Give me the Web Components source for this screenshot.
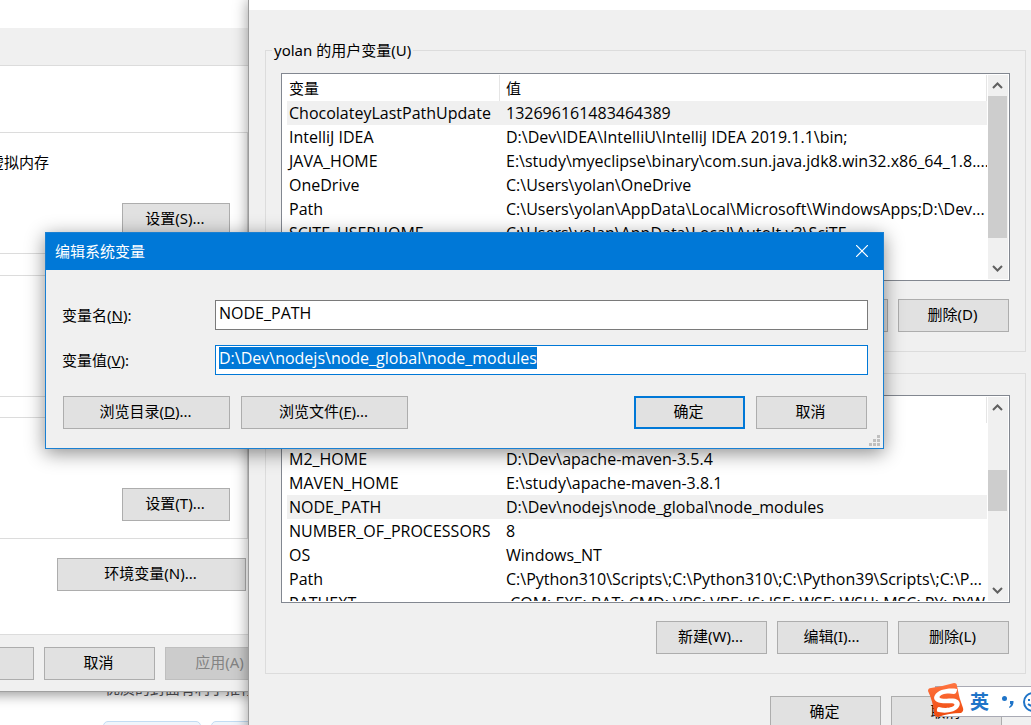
<!DOCTYPE html>
<html lang="zh-CN">
<head>
<meta charset="utf-8">
<title>环境变量</title>
<style>
  html, body { margin: 0; height: 100%; }
  body { font: 15px/20px "Noto Sans", "Noto Sans CJK SC", sans-serif; color: #000; background: #fff; overflow: hidden; }
</style>
</head>
<body>
<win-desktop></win-desktop>

<template id="t-button">
  <style>
    :host { display: block; width: 111px; flex: none; }
    button { display: block; box-sizing: border-box; width: 100%; height: 33px; padding: 0 2px 3px 0; margin: 0; border: 1px solid #adadad; border-radius: 0; background: #e1e1e1; color: #000; font: inherit; text-align: center; white-space: nowrap; }
    :host([primary]) button { border: 2px solid #0078d7; }
    button:disabled { background: #ccc; border-color: #bfbfbf; color: #838383; }
  </style>
  <button type="button"><slot></slot></button>
</template>

<template id="t-scroll">
  <style>
    :host { display: flex; flex-direction: column; width: 20px; flex: none; background: #f0f0f0; }
    svg { display: block; width: 19px; height: 21px; flex: none; }
    .track { flex: 1; padding-top: var(--start, 0px); }
    .thumb { width: 19px; height: var(--size, 40px); background: #cdcdcd; }
    path { fill: none; stroke: #606060; stroke-width: 2; }
  </style>
  <svg viewBox="0 0 19 21"><path d="M5 13 L9.500 8.500 L14 13"/></svg>
  <div class="track"><div class="thumb"></div></div>
  <svg viewBox="0 0 19 21"><path d="M5 8 L9.500 12.500 L14 8"/></svg>
</template>

<template id="t-list">
  <style>
    :host { display: flex; box-sizing: border-box; height: 208px; border: 1px solid #828790; background: #fff; padding: 1px; }
    .view { flex: 1; min-width: 0; overflow: hidden; padding-left: 4px; }
    table { width: 100%; table-layout: fixed; border-collapse: separate; border-spacing: 0; }
    col.name { width: 213px; }
    th, td { padding: 0; text-align: left; font-weight: 400; white-space: nowrap; height: 24px; line-height: 24px; }
    td { font-family: "Open Sans", "Noto Sans CJK SC", sans-serif; font-size: 16px; }
    th { height: 26px; line-height: 26px; border-right: 1px solid #e5e5e5; }
    th:first-child, td:first-child { padding-left: 2px; }
    th + th, td + td { padding-left: 6px; }
    .hot td { background: #f0f0f0; }
    win-scroll { margin-left: 1px; }
  </style>
  <div class="view"><table><colgroup><col class="name"><col></colgroup><thead></thead><tbody></tbody></table></div>
  <win-scroll></win-scroll>
</template>

<template id="t-group">
  <style>
    :host { display: block; }
    fieldset { margin: 0; min-width: 0; border: 1px solid #dcdcdc; padding: 21px 15px 19px; }
    .titled { padding-top: 13px; margin-top: -9px; }
    legend { padding: 0 2px; margin-left: -9px; }
    .row { display: flex; justify-content: flex-end; gap: 10px; margin: 18px 1px 0 0; }
  </style>
  <fieldset><slot></slot><div class="row"><slot name="actions"></slot></div></fieldset>
</template>

<template id="t-field">
  <style>
    :host { display: flex; align-items: center; }
    label { width: 153px; flex: none; }
    input { flex: 1; min-width: 0; box-sizing: border-box; height: 30px; margin: 0; border: 1px solid #7a7a7a; border-radius: 0; outline: 0; background: #fff; color: #000; font: 16px "Open Sans", "Noto Sans CJK SC", sans-serif; padding: 0 3px 4px; }
    input:focus, :host([active]) input { border-color: #0078d7; }
    input::selection { background: #0078d7; color: #fff; }
  </style>
  <label for="f"><slot></slot></label><input id="f" type="text" spellcheck="false">
</template>

<template id="t-page">
  <style>
    :host { display: flex; flex-direction: column; gap: 23px; padding-left: 103px; color: #55555a; }
    p { margin: 0 0 0 2px; white-space: nowrap; }
    .chips { display: flex; gap: 10px; }
    .chips i { width: 96px; height: 30px; border: 1px solid #c3dcf3; border-radius: 5px; background: #f0f5fb; }
  </style>
  <p>优质的封面有利于推荐</p>
  <div class="chips"><i></i><i></i></div>
</template>

<template id="t-props">
  <style>
    :host { display: flex; flex-direction: column; box-sizing: border-box; background: #fff; border-bottom: 1px solid #a0a0a0; box-shadow: 0 3px 12px rgba(0,0,0,.4); }
    .tabs { margin-top: 28px; height: 37px; background: #f0f0f0; border-bottom: 1px solid #dcdcdc; }
    .panel { flex: 1; padding: 66px 40px 0 60px; }
    section { box-sizing: border-box; height: 122px; margin-bottom: 20px; border: 1px solid #dcdcdc; padding: 19px 17px 0 0; }
    section:first-child { margin-bottom: 21px; }
    p { margin: 0; height: 20px; }
    section win-button { width: 108px; margin: 31px 0 0 auto; }
    .env { width: 189px; margin: -1px 2px 0 auto; }
    .foot { display: flex; gap: 10px; justify-content: flex-end; padding: 12px 12px 11px; background: #f0f0f0; border-top: 1px solid #dcdcdc; }
  </style>
  <div class="tabs"></div>
  <div class="panel">
    <section><p>虚拟内存</p><win-button>设置(S)...</win-button></section>
    <section></section>
    <section><p></p><win-button>设置(T)...</win-button></section>
    <win-button class="env">环境变量(N)...</win-button>
  </div>
  <div class="foot"><win-button name="确定"></win-button><win-button>取消</win-button><win-button disabled>应用(A)</win-button></div>
</template>

<template id="t-env">
  <style>
    :host { display: block; box-sizing: border-box; background: #f0f0f0; border-left: 1px solid #9b9b9b; box-shadow: 0 0 14px rgba(0,0,0,.4); }
    .bar { height: 10px; background: #fff; }
    .body { padding: 39px 5px 0 16px; }
    win-group + win-group { margin-top: 21px; }
    .foot { display: flex; gap: 10px; justify-content: flex-end; padding: 22px 24px 0 0; }
  </style>
  <div class="bar"></div>
  <div class="body">
    <win-group legend="yolan 的用户变量(U)">
      <var-list id="user" style="--start:0px;--size:142px"></var-list>
      <win-button slot="actions" name="编辑"></win-button>
      <win-button slot="actions">删除(D)</win-button>
    </win-group>
    <win-group name="系统变量">
      <var-list id="system" style="--start:52px;--size:41px"></var-list>
      <win-button slot="actions">新建(W)...</win-button>
      <win-button slot="actions">编辑(I)...</win-button>
      <win-button slot="actions">删除(L)</win-button>
    </win-group>
    <div class="foot"><win-button>确定</win-button><win-button>取消</win-button></div>
  </div>
</template>

<template id="t-dialog">
  <style>
    :host { display: block; box-sizing: border-box; border: 1px solid #1a80d2; background: #f0f0f0; box-shadow: 0 4px 18px rgba(0,0,0,.45); }
    header { display: flex; align-items: center; justify-content: space-between; box-sizing: border-box; height: 37px; padding: 0 15px 2px 9px; background: #0078d7; color: #fff; }
    .close { display: block; width: 12px; height: 12px; padding: 0; border: 0; background: none; }
    svg { display: block; }
    form { padding: 30px 15px 19px 16px; }
    win-field + win-field { margin-top: 15px; }
    .row { display: flex; gap: 11px; margin-top: 21px; padding: 0 1px; }
    .wide { width: 167px; }
    .gap { flex: 1; margin: 0 -11px; }
    .grip { position: absolute; right: 3px; bottom: 2px; }
  </style>
  <header><span>编辑系统变量</span>
    <button class="close" type="button" aria-label="关闭"><svg width="12" height="12" viewBox="0 0 12 12"><path d="M0 0L12 12M12 0L0 12" stroke="#fff" stroke-width="1.200"/></svg></button>
  </header>
  <form>
    <win-field value="NODE_PATH">变量名(<u>N</u>):</win-field>
    <win-field active value="D:\Dev\nodejs\node_global\node_modules">变量值(<u>V</u>):</win-field>
    <div class="row">
      <win-button class="wide">浏览目录(<u>D</u>)...</win-button>
      <win-button class="wide">浏览文件(<u>F</u>)...</win-button>
      <span class="gap"></span>
      <win-button primary>确定</win-button>
      <win-button>取消</win-button>
    </div>
  </form>
  <svg class="grip" width="11" height="11" viewBox="0 0 11 11" fill="#bfbfbf"><path d="M8 0h3v3h-3zM4 4h3v3h-3zM8 4h3v3h-3zM0 8h3v3h-3zM4 8h3v3h-3zM8 8h3v3h-3z"/></svg>
</template>

<template id="t-ime">
  <style>
    :host { display: flex; align-items: center; box-sizing: border-box; height: 31px; background: #fff; border: 1px solid #a9aab4; border-right: 0; padding-left: 34px; color: #1f74c8; }
    b { font-size: 19px; }
    svg { display: block; flex: none; }
    .logo { position: absolute; left: -8px; top: -4px; }
    .marks { margin-left: 12px; }
    .face { margin-left: 9px; }
  </style>
  <svg class="logo" width="38" height="36" viewBox="0 0 38 36">
    <defs><linearGradient id="o" x1="0" y1="0" x2="0" y2="1"><stop offset="0" stop-color="#ff7440"/><stop offset="1" stop-color="#ee4a0e"/></linearGradient></defs>
    <path d="M3 5 Q16 3 26 0 Q29 0 29 3 Q31 15 35 25 Q36 28 33 30 Q21 30 10 34 Q7 34 6 31 Q5 18 0 8 Q0 5 3 5Z" fill="url(#o)"/>
    <path d="M29 6 C29 8 28 11 26 11 C19 9.500 12 11.500 11.500 14 C11.500 17 19 15 25 15.500 C31 16 33 20 31 23.500 C28 29.500 16 31 9 28.500 C8.500 26 9.500 24 11 24 C18 26 26 24.500 26.500 21.500 C26 19 19 21 13 20 C6 19 5 15 7 12 C10 6.500 21 4.500 29 6Z" fill="#fff"/>
  </svg>
  <b>英</b>
  <svg class="marks" width="13" height="16" viewBox="0 0 13 16" fill="#1f74c8"><circle cx="3.500" cy="4.500" r="2.500"/><path d="M9 7h3.500q.5 5-4 7l-.5-1q2-1.300 1.800-3h-.8z"/></svg>
  <svg class="face" width="20" height="20" viewBox="0 0 20 20" fill="none" stroke="#1f74c8" stroke-width="2"><circle cx="10" cy="10" r="9"/><path d="M6 7v2M14 7v2M5 12q5 4 10 0"/></svg>
</template>

<template id="t-desktop">
  <style>
    :host { display: block; position: relative; height: 100%; overflow: hidden; }
    :host > * { position: absolute; }
    web-page, props-window, env-window, edit-dialog, ime-bar { position: absolute; }
    web-page { left: 0; right: 0; top: 678px; }
    props-window { left: -72px; width: 360px; height: 692px; top: 0; }
    env-window { left: 248px; right: 0; top: 0; height: 800px; }
    edit-dialog { left: 45px; right: 147px; top: 232px; }
    ime-bar { left: 935px; right: 0; top: 686px; }
  </style>
  <web-page></web-page>
  <props-window></props-window>
  <env-window></env-window>
  <edit-dialog></edit-dialog>
  <ime-bar></ime-bar>
</template>

<script>
  class Base extends HTMLElement {
    constructor() {
      super();
      this.attachShadow({ mode: 'open' }).append(
        document.getElementById(this.constructor.tpl).content.cloneNode(true));
    }
    $(s) { return this.shadowRoot.querySelector(s); }
  }
  const define = (tag, tpl, init) => customElements.define(tag, class extends Base {
    static tpl = tpl;
    connectedCallback() { if (init) init.call(this); }
  });

  const DATA = {
    user: { head: ['变量', '值'], hot: 0, rows: [
      ['ChocolateyLastPathUpdate', '132696161483464389'],
      ['IntelliJ IDEA', 'D:\\Dev\\IDEA\\IntelliU\\IntelliJ IDEA 2019.1.1\\bin;'],
      ['JAVA_HOME', 'E:\\study\\myeclipse\\binary\\com.sun.java.jdk8.win32.x86_64_1.8....'],
      ['OneDrive', 'C:\\Users\\yolan\\OneDrive'],
      ['Path', 'C:\\Users\\yolan\\AppData\\Local\\Microsoft\\WindowsApps;D:\\Dev...'],
      ['SCITE_USERHOME', 'C:\\Users\\yolan\\AppData\\Local\\AutoIt v3\\SciTE']
    ] },
    system: { head: ['', ''], hot: 3, rows: [
      ['', ''],
      ['M2_HOME', 'D:\\Dev\\apache-maven-3.5.4'],
      ['MAVEN_HOME', 'E:\\study\\apache-maven-3.8.1'],
      ['NODE_PATH', 'D:\\Dev\\nodejs\\node_global\\node_modules'],
      ['NUMBER_OF_PROCESSORS', '8'],
      ['OS', 'Windows_NT'],
      ['Path', 'C:\\Python310\\Scripts\\;C:\\Python310\\;C:\\Python39\\Scripts\\;C:\\P...'],
      ['PATHEXT', '.COM;.EXE;.BAT;.CMD;.VBS;.VBE;.JS;.JSE;.WSF;.WSH;.MSC;.PY;.PYW']
    ] }
  };

  define('win-button', 't-button', function () {
    const b = this.$('button');
    b.disabled = this.hasAttribute('disabled');
    if (this.hasAttribute('name')) b.setAttribute('aria-label', this.getAttribute('name'));
  });
  define('win-scroll', 't-scroll');
  define('var-list', 't-list', function () {
    const data = DATA[this.id];
    const line = (cells, tag) => {
      const tr = document.createElement('tr');
      for (const c of cells) { const el = document.createElement(tag); el.textContent = c; tr.append(el); }
      return tr;
    };
    this.$('thead').replaceChildren(line(data.head, 'th'));
    this.$('tbody').replaceChildren(...data.rows.map(r => line(r, 'td')));
    this.$('tbody').rows[data.hot].className = 'hot';
  });
  define('win-group', 't-group', function () {
    const f = this.$('fieldset');
    if (this.hasAttribute('legend')) {
      const l = document.createElement('legend');
      l.textContent = this.getAttribute('legend');
      f.prepend(l);
      f.className = 'titled';
    } else f.setAttribute('aria-label', this.getAttribute('name'));
  });
  define('win-field', 't-field', function () {
    const i = this.$('input');
    i.value = this.getAttribute('value');
    if (this.hasAttribute('active')) { i.focus(); i.select(); }
  });
  define('web-page', 't-page');
  define('props-window', 't-props');
  define('env-window', 't-env');
  define('edit-dialog', 't-dialog');
  define('ime-bar', 't-ime');
  define('win-desktop', 't-desktop');
</script>
</body>
</html>
